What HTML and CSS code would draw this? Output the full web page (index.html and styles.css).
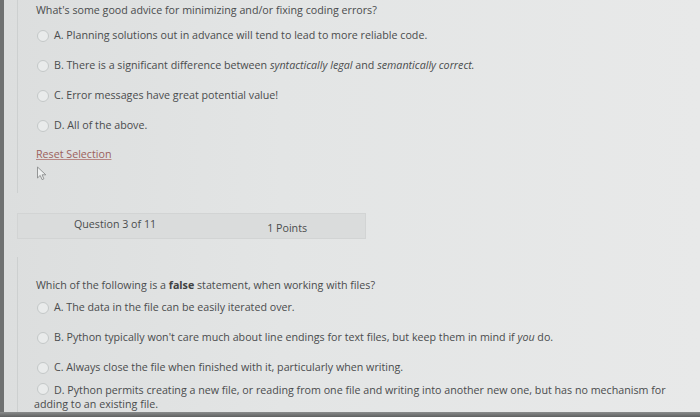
FILE: index.html
```html
<!DOCTYPE html>
<html>
<head>
<meta charset="utf-8">
<link rel="stylesheet" href="styles.css">
</head>
<body>
<div class="screen">
  <section class="question q1">
    <p class="stem">What's some good advice for minimizing and/or fixing coding errors?</p>
    <ul class="options">
      <li class="opt"><span class="radio"></span><span>A. Planning solutions out in advance will tend to lead to more reliable code.</span></li>
      <li class="opt"><span class="radio"></span><span>B. There is a significant difference between <em>syntactically legal</em> and <em>semantically correct.</em></span></li>
      <li class="opt"><span class="radio"></span><span>C. Error messages have great potential value!</span></li>
      <li class="opt"><span class="radio"></span><span>D. All of the above.</span></li>
    </ul>
    <a class="reset" href="#">Reset Selection</a>
    <svg class="cursor" width="13" height="15" viewBox="0 0 13 15"><path d="M1.5 1 L1.5 12 L4.2 9.4 L6.1 13.6 L7.9 12.8 L6.1 8.8 L9.8 8.8 Z" fill="#eef0f0" stroke="#8a8c8c" stroke-width="0.9" stroke-linejoin="round"/></svg>
  </section>

  <div class="qbar">
    <span class="qnum">Question 3 of 11</span>
    <span class="qpts">1 Points</span>
  </div>

  <section class="question q2">
    <p class="stem">Which of the following is a <strong>false</strong> statement, when working with files?</p>
    <ul class="options">
      <li class="opt"><span class="radio"></span><span>A. The data in the file can be easily iterated over.</span></li>
      <li class="opt"><span class="radio"></span><span>B. Python typically won't care much about line endings for text files, but keep them in mind if <em>you</em> do.</span></li>
      <li class="opt"><span class="radio"></span><span>C. Always close the file when finished with it, particularly when writing.</span></li>
      <li class="opt wrap"><span class="radio"></span>D. Python permits creating a new file, or reading from one file and writing into another new one, but has no mechanism for adding to an existing file.</li>
    </ul>
  </section>
  <div class="bottom-band"></div>
</div>
</body>
</html>
```

FILE: styles.css
```css
html, body {
  margin: 0;
  padding: 0;
}
body {
  width: 700px;
  height: 417px;
  overflow: hidden;
  font-family: "Open Sans", "Noto Sans", sans-serif;
  font-size: 10.7px;
  color: #4a4c4d;
}
.screen {
  position: relative;
  width: 696px;
  height: 417px;
  border-left: 4px solid #6f7171;
  background: linear-gradient(90deg, #dcdede 0%, #e3e5e5 40%, #e8e9e9 100%);
  display: flex;
  flex-direction: column;
}
.question {
  margin-left: 13px;
  border-left: 1px solid #cdd0d0;
  padding-left: 18px;
  display: flex;
  flex-direction: column;
}
.q1 {
  height: 190px;
  padding-top: 3px;
}
.stem {
  margin: 0;
  line-height: 15px;
}
.options {
  list-style: none;
  margin: 0;
  padding: 0;
  display: flex;
  flex-direction: column;
}
.opt {
  display: flex;
  align-items: center;
  gap: 5px;
  height: 15px;
  line-height: 15px;
}
.q1 .options {
  margin-top: 10px;
  gap: 15px;
}
.radio {
  flex: none;
  width: 10px;
  height: 10px;
  border-radius: 50%;
  border: 1px solid #c4c8c8;
  background: #e9ebeb;
  margin-left: 1px;
}
.reset {
  margin-top: 14px;
  align-self: flex-start;
  color: #9c5f5c;
  text-decoration: underline;
  text-decoration-color: #b78784;
  line-height: 15px;
}
.cursor {
  margin-top: 4px;
  margin-left: 0px;
}
.qbar {
  margin-left: 13px;
  margin-top: 20px;
  width: 347px;
  height: 24px;
  border: 1px solid #d2d4d4;
  background: #dadcdc;
  display: flex;
  align-items: center;
  flex: none;
}
.qnum {
  margin-left: 56px;
  margin-top: -4px;
}
.qpts {
  margin-left: 111px;
  margin-top: 3px;
}
.q2 {
  margin-top: 18px;
  padding-top: 21px;
  flex: 1;
}
.q2 strong {
  font-weight: 700;
  color: #3f4142;
}
.q2 .options {
  margin-top: 7px;
  gap: 15px;
}
.q2 .opt.wrap {
  display: block;
  height: auto;
  margin-top: -7px;
  margin-left: -2px;
  line-height: 14px;
  width: 640px;
}
.q2 .opt.wrap .radio {
  display: inline-block;
  vertical-align: -1px;
  margin-left: 3px;
  margin-right: 5px;
}
.bottom-band {
  position: absolute;
  left: -4px;
  right: 0;
  bottom: 0;
  height: 5px;
  background: linear-gradient(180deg, #8a8c8c, #5f6161);
}
```
